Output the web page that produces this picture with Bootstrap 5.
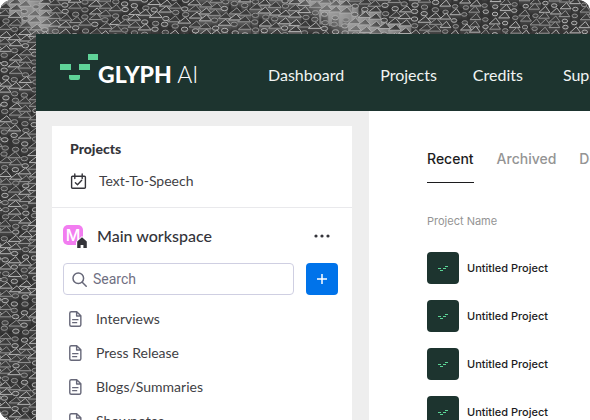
<!DOCTYPE html>
<html lang="en">
<head>
<meta charset="utf-8">
<meta name="viewport" content="width=device-width, initial-scale=1">
<title>Glyph AI</title>
<link href="https://cdn.jsdelivr.net/npm/bootstrap@5.3.0/dist/css/bootstrap.min.css" rel="stylesheet">
<style>
body{font-family:Lato,"Liberation Sans",sans-serif;color:#34343a;background:#fff}
.stage{height:100vh;border-radius:12px 12px 0 12px;padding:34px 0 0 36px}
.backdrop{top:0;left:0;width:100%;height:100%}
.topbar{background:#1d342f;height:77px;padding:4px 0 0 24px}
.brand{color:#fff;text-decoration:none;width:208px}
.brand-name{font-size:23px;line-height:24px;font-weight:900}
.brand-name .thin{font-weight:300}
.menu{gap:36px}
.menu a{font-size:16px;line-height:24px;color:#f1f4f3;text-decoration:none}
.side{width:333px;background:#eee;padding:15px 17px 0 16px}
.group-top{padding:13px 18px 16px;border-bottom:1px solid #e9e9ec}
.side h2{font-size:14px;line-height:20px;font-weight:900;margin:0 0 12px}
.side a{color:#3f3f45;text-decoration:none;font-size:14px;line-height:20px}
.group-main{padding:16px 14px 0 11px}
.ws-name{font-size:16px;line-height:24px;font-weight:500;margin:0}
.avatar{width:24px;height:24px;margin-right:10px}
.finder{margin-top:15px}
.search{height:32px;border:1px solid #cfcfe2;border-radius:4px;padding:0 8px;gap:6px;min-width:0}
.search input{border:0;outline:0;background:transparent;font-size:14px;line-height:20px;color:#6a6a80;font-family:Roboto,sans-serif;min-width:0}
.search input::placeholder{color:#6f6f82;opacity:1}
.add{width:32px;height:32px;background:#0073ea;border-radius:4px;border:0}
.docs{padding:7px 5px 0}
.docs a{height:34px;gap:13px}
.content{min-width:0;padding:37px 0 0 58px;font-family:Inter,sans-serif}
.tabs{gap:23px}
.tabs button{border:0;border-bottom:1px solid transparent;background:none;padding:0 0 12px;font-size:14px;line-height:22px;font-weight:500;color:#949494}
.tabs .current{color:#1c1c1e;border-color:#1c1c1e}
.files{width:100%;margin-top:28px}
.files th{font-size:11px;line-height:20px;font-weight:400;color:#949494;padding:0 0 13px}
.files td{height:48px;padding:0;font-size:11px;line-height:16px;font-weight:500;color:#1c1c1e}
.tile{width:32px;height:32px;border-radius:4px;background:#1d342f}
</style>
<script src="https://cdn.jsdelivr.net/npm/bootstrap@5.3.0/dist/js/bootstrap.bundle.min.js"></script>
</head>
<body>
<svg width="0" height="0" class="position-absolute" aria-hidden="true">
  <symbol id="doc" viewBox="0 0 16 18"><path d="M3.500 1.200h5.800l4.400 4.400v9.600a1.600 1.600 0 0 1-1.600 1.600H3.500a1.600 1.600 0 0 1-1.600-1.600V2.800a1.600 1.600 0 0 1 1.600-1.600zM9.200 1.400v4.400h4.400M5 9.700h5.600M5 12.900h4.200" fill="none" stroke="#676879" stroke-width="1.500" stroke-linecap="round" stroke-linejoin="round"/></symbol>
  <symbol id="mini" viewBox="0 0 32 32"><path d="M11 16h3v1h-3zM16 16h3v1h-3zM18 14h3v1h-3zM13 18h3v1h-3z" fill="#5bd596"/></symbol>
</svg>
<div class="stage position-relative overflow-hidden">
  <svg id="field" class="backdrop position-absolute" aria-hidden="true">
    <defs>
      <linearGradient id="dark" x2="0" y2="1"><stop stop-color="#4a4a4a"/><stop offset="1" stop-color="#292929"/></linearGradient>
      <linearGradient id="mid" x2="0" y2="1"><stop stop-color="#666"/><stop offset="1" stop-color="#303030"/></linearGradient>
      <linearGradient id="pale" x2="1" y2="1"><stop stop-color="#999"/><stop offset="1" stop-color="#5c5c5c"/></linearGradient>
      <filter id="soft" x="-50%" y="-50%" width="200%" height="200%"><feGaussianBlur stdDeviation="6"/></filter>
    </defs>
  </svg>
  <div class="position-relative h-100 d-flex flex-column">
    <header class="topbar d-flex align-items-center flex-shrink-0 overflow-hidden">
      <a class="brand d-flex flex-shrink-0" href="#" aria-label="Glyph AI">
        <svg class="flex-shrink-0" width="38" height="42" viewBox="0 0 38 42"><path d="M28 0h11v6H28zM0 10h11v6H0zM19 10h11v6H19zM9 21h11v3q0 2-2 2h-7q-2 0-2-2z" fill="#5fd398"/></svg>
        <span class="brand-name pt-2">GLYPH <span class="thin">AI</span></span>
      </a>
      <nav class="menu d-flex flex-shrink-0"><a href="#">Dashboard</a><a href="#">Projects</a><a href="#">Credits</a><a class="ms-1" href="#">Support</a></nav>
    </header>
    <div class="d-flex flex-grow-1 overflow-hidden bg-white">
      <aside class="side flex-shrink-0">
        <div class="bg-white h-100">
          <div class="group-top">
            <h2>Projects</h2>
            <a href="#" class="d-flex align-items-center gap-2"><svg class="me-1" width="17" height="17" viewBox="0 0 17 17" fill="none" stroke="#34343a" stroke-width="1.400" stroke-linecap="round" stroke-linejoin="round"><path d="M2.600 3.300h11.800q1 0 1 1v10q0 1-1 1H2.600q-1 0-1-1v-10q0-1 1-1zM4.800 1v4.500M12.200 1v4.500M5.400 9.700l2.100 2 4.200-4.400"/></svg>Text-To-Speech</a>
          </div>
          <div class="group-main">
            <div class="d-flex align-items-center">
              <svg class="avatar flex-shrink-0" viewBox="0 0 24 24"><rect y="1" width="20" height="20" rx="5" fill="#f27df0"/><text x="10" y="17" text-anchor="middle" font-family="Inter" font-size="16" font-weight="500" fill="#fff">M</text><path d="M14 18.500l5-5 5 5V24H14z" fill="#fff" stroke="#fff" stroke-width="2"/><path d="M14.200 17.500l4.800-4.200 4.800 4.200V24H20.400v-3h-2.800v3H14.200z" fill="#34343a"/></svg>
              <h3 class="ws-name flex-grow-1">Main workspace</h3>
              <button class="btn border-0 p-0 me-2 d-flex" type="button" aria-label="Workspace options"><svg width="16" height="16" viewBox="0 0 16 16" fill="#34343a"><circle cx="2" cy="8" r="1.600"/><circle cx="8" cy="8" r="1.600"/><circle cx="14" cy="8" r="1.600"/></svg></button>
            </div>
            <div class="finder d-flex">
              <label class="search d-flex align-items-center flex-grow-1 me-2"><svg class="flex-shrink-0" width="15" height="15" viewBox="0 0 15 15" fill="none" stroke="#676879" stroke-width="1.500" stroke-linecap="round"><circle cx="6.300" cy="6.300" r="5.300"/><path d="M10.200 10.200L14.200 14.200"/></svg><input class="flex-grow-1 p-0" type="text" placeholder="Search" aria-label="Search"></label>
              <button class="add d-flex align-items-center justify-content-center flex-shrink-0 p-0 ms-1" type="button" aria-label="Add"><svg width="10" height="10" viewBox="0 0 10 10"><path d="M5 0v10M0 5h10" stroke="#fff" stroke-width="1.500"/></svg></button>
            </div>
            <nav class="docs">
              <a href="#" class="d-flex align-items-center"><svg width="15" height="18"><use href="#doc"/></svg>Interviews</a>
              <a href="#" class="d-flex align-items-center"><svg width="15" height="18"><use href="#doc"/></svg>Press Release</a>
              <a href="#" class="d-flex align-items-center"><svg width="15" height="18"><use href="#doc"/></svg>Blogs/Summaries</a>
              <a href="#" class="d-flex align-items-center"><svg width="15" height="18"><use href="#doc"/></svg>Shownotes</a>
            </nav>
          </div>
        </div>
      </aside>
      <main class="content flex-grow-1 overflow-hidden">
        <div class="tabs d-flex"><button class="current" type="button">Recent</button><button type="button">Archived</button><button type="button">Deleted</button></div>
        <table class="files">
          <thead><tr><th>Project Name</th></tr></thead>
          <tbody>
            <tr><td><div class="d-flex align-items-center gap-2"><svg class="tile"><use href="#mini"/></svg>Untitled Project</div></td></tr>
            <tr><td><div class="d-flex align-items-center gap-2"><svg class="tile"><use href="#mini"/></svg>Untitled Project</div></td></tr>
            <tr><td><div class="d-flex align-items-center gap-2"><svg class="tile"><use href="#mini"/></svg>Untitled Project</div></td></tr>
            <tr><td><div class="d-flex align-items-center gap-2"><svg class="tile"><use href="#mini"/></svg>Untitled Project</div></td></tr>
          </tbody>
        </table>
      </main>
    </div>
  </div>
</div>
<script>
// Field of small prisms and cylinders behind the window, in rows that rise to the right
(function(){
  var seed=7,list=[];
  function rnd(){seed=(seed*16807)%2147483647;return seed/2147483647}
  function piece(x,y,w,h,fill,line,round){
    var r=w/2;
    if(round)return '<path d="M'+(x-r*.5)+' '+y+'v'+h+'h'+r+'v-'+h+'z" fill="url(#'+fill+')"/><ellipse cx="'+x+'" cy="'+y+'" rx="'+(r*.5)+'" ry="'+(r*.33)+'" fill="#444" stroke="'+line+'"/>';
    return '<path d="M'+(x-r)+' '+(y+2)+'v'+h+'h'+w+'v-'+h+'z" fill="url(#'+fill+')"/><path d="M'+(x-r)+' '+(y+2)+'L'+(x+r*.2)+' '+(y-4)+'L'+(x+r)+' '+(y+2)+'z" fill="#3c3c3c" stroke="'+line+'"/>';
  }
  for(var base=-6;base<760;base+=7){
    for(var x=604;x>-12;x-=10){
      var y=base-x*.5+rnd()*2,px=x+rnd()*2;
      if(y<-24||y>430||(y>44&&px>46))continue;
      var tall=(y<24&&px<50&&px>y+6)||(y<36&&Math.abs(px-330-y*2.2)<24);
      var mid=px>200&&px<300;
      list.push([y,piece(px,y,px>440?11:13,tall?14:7,tall?'pale':(mid?'mid':'dark'),tall?'#acacac':(rnd()>.5?'#b2b2b2':'#929292'),rnd()>.55)]);
    }
  }
  list.sort(function(a,b){return a[0]-b[0]});
  document.getElementById('field').insertAdjacentHTML('beforeend','<rect width="100%" height="100%" fill="#333"/>'+list.map(function(p){return p[1]}).join('')+
    '<g filter="url(#soft)" fill="#aaa" opacity=".5"><path d="M10 -6L34 -6L60 36L36 36zM290 -6L330 -6L396 40L350 40z"/></g>');
})();
</script>
</body>
</html>
